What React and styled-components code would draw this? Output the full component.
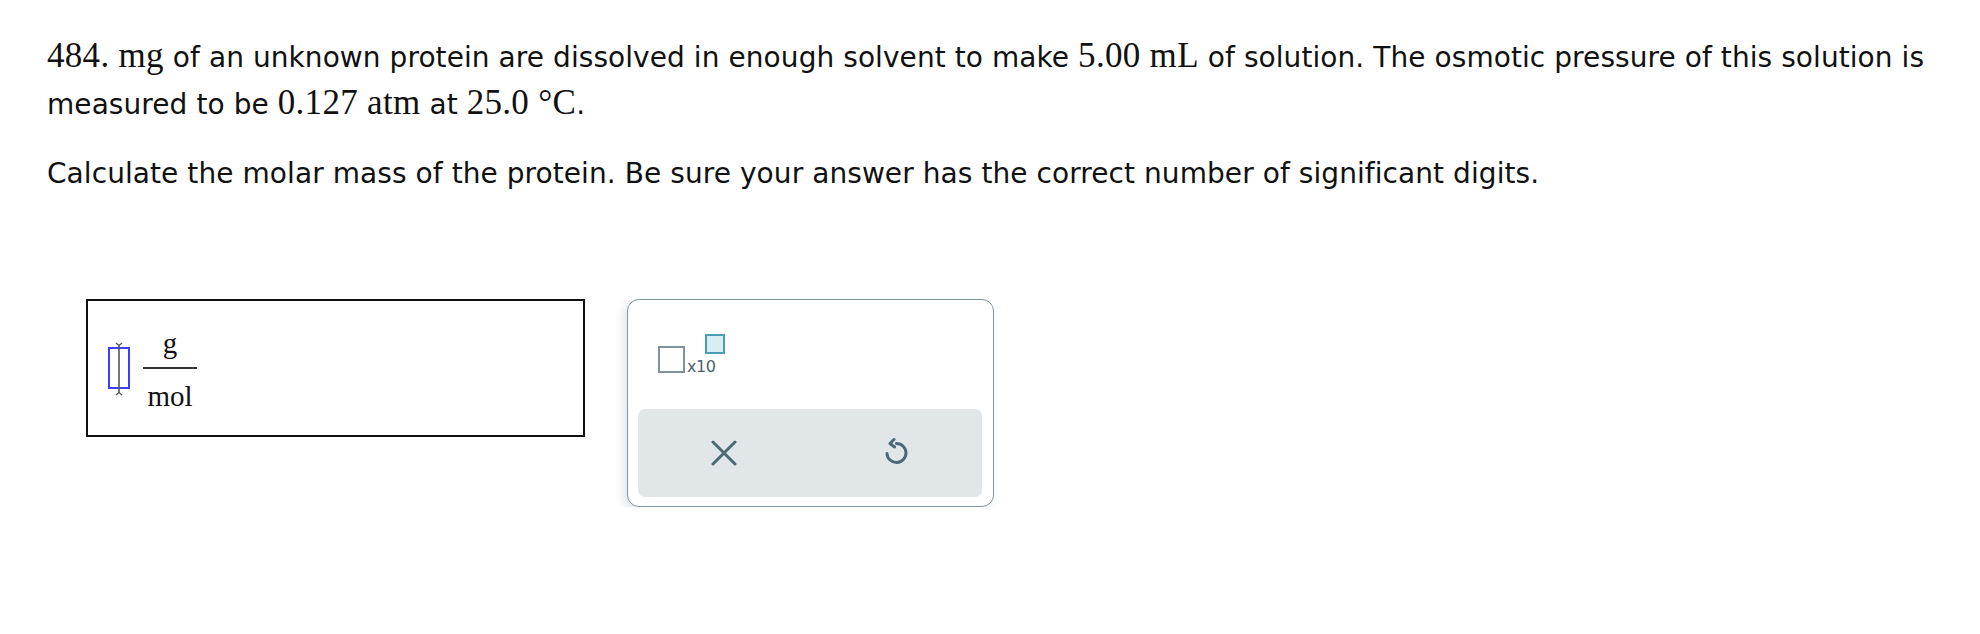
import React from "react";
import styled, { createGlobalStyle } from "styled-components";

const GlobalStyle = createGlobalStyle`
  html, body { margin: 0; padding: 0; background: #fff; }
  body { font-family: "DejaVu Sans", Verdana, sans-serif; color: #111; }
`;

const Page = styled.div`
  padding: 34px 20px 0 47px;
`;

const Para = styled.p`
  margin: 0;
  font-size: 28px;
  line-height: 47px;
  letter-spacing: 0.07px;
  & + & { margin-top: 22px; }
`;

const M = styled.span`
  font-family: "Liberation Serif", "Times New Roman", serif;
  font-size: 35px;
  line-height: 1;
  letter-spacing: 0.3px;
`;

const AnswerRow = styled.div`
  display: flex;
  align-items: flex-start;
  gap: 42px;
  margin: 102px 0 0 39px;
`;

const AnswerBox = styled.div`
  box-sizing: border-box;
  width: 499px;
  height: 138px;
  border: 2px solid #111;
  display: flex;
  align-items: center;
  padding-left: 20px;
`;

const Slot = styled.div`
  position: relative;
  box-sizing: border-box;
  width: 22px;
  height: 42px;
  border: 2px solid #3d3dfa;
`;

const Cursor = styled.svg`
  position: absolute;
  left: 50%;
  top: -7px;
  transform: translateX(-50%);
`;

const Fraction = styled.div`
  display: inline-flex;
  flex-direction: column;
  align-items: center;
  margin-left: 13px;
  margin-top: 6px;
  font-family: "Liberation Serif", "Times New Roman", serif;
  font-size: 29px;
  color: #111;
`;

const Num = styled.span`
  line-height: 30px;
  padding-bottom: 9px;
`;

const Bar = styled.div`
  width: 54px;
  height: 2px;
  background: #333;
`;

const Den = styled.span`
  line-height: 36px;
  padding-top: 9px;
`;

const Keypad = styled.div`
  box-sizing: border-box;
  width: 367px;
  height: 208px;
  border: 1.5px solid #82979f;
  border-radius: 12px;
  background: #fff;
  box-shadow: -4px 4px 8px rgba(40, 60, 70, 0.12);
  padding: 0 11px 9px 10px;
  display: flex;
  flex-direction: column;
  justify-content: flex-end;
`;

const KeyArea = styled.div`
  flex: 1;
  display: flex;
  align-items: flex-start;
  padding: 46px 0 0 20px;
`;

const SciKey = styled.div`
  display: flex;
  align-items: flex-end;
`;

const Base = styled.div`
  box-sizing: border-box;
  width: 27px;
  height: 27px;
  border: 2.5px solid #7e949d;
  margin-bottom: 1px;
`;

const TimesTen = styled.span`
  font-family: "DejaVu Sans", sans-serif;
  font-size: 16px;
  color: #4e626c;
  line-height: 15px;
  margin-left: 2px;
  letter-spacing: -0.5px;
`;

const Exp = styled.div`
  box-sizing: border-box;
  width: 20px;
  height: 20px;
  border: 2.5px solid #4a9db5;
  background: #d6eef4;
  align-self: flex-start;
  margin-top: -12px;
  margin-left: -10px;
`;

const ButtonBar = styled.div`
  height: 88px;
  background: #e1e6e9;
  border-radius: 7px;
  display: grid;
  grid-template-columns: 1fr 1fr;
`;

const Btn = styled.button`
  border: 0;
  background: transparent;
  display: flex;
  align-items: center;
  justify-content: center;
  padding: 0;
  cursor: pointer;
`;

export default function App() {
  return (
    <>
      <GlobalStyle />
      <Page>
        <Para>
          <M>484. mg</M> of an unknown protein are dissolved in enough solvent to make{" "}
          <M>5.00 mL</M> of solution. The osmotic pressure of this solution is measured to be{" "}
          <M>0.127 atm</M> at <M>25.0 °C</M>.
        </Para>
        <Para>
          Calculate the molar mass of the protein. Be sure your answer has the correct number of significant digits.
        </Para>
        <AnswerRow>
          <AnswerBox>
            <Slot>
              <Cursor width="10" height="54" viewBox="0 0 10 54">
                <path d="M5 3v48" stroke="#555" strokeWidth="1.6" />
                <path d="M2 1l3 2.5L8 1M2 53l3-2.5L8 53" stroke="#555" strokeWidth="1.3" fill="none" />
              </Cursor>
            </Slot>
            <Fraction>
              <Num>g</Num>
              <Bar />
              <Den>mol</Den>
            </Fraction>
          </AnswerBox>
          <Keypad>
            <KeyArea>
              <SciKey>
                <Base />
                <TimesTen>x10</TimesTen>
                <Exp />
              </SciKey>
            </KeyArea>
            <ButtonBar>
              <Btn aria-label="clear">
                <svg width="26" height="26" viewBox="0 0 26 26">
                  <path d="M2 2L24 24M24 2L2 24" stroke="#4c6977" strokeWidth="3" strokeLinecap="round" />
                </svg>
              </Btn>
              <Btn aria-label="undo">
                <svg width="30" height="30" viewBox="0 0 30 30">
                  <path d="M15.5 5.5A9.5 9.5 0 1 1 6 15.5" stroke="#4c6977" strokeWidth="3" fill="none" strokeLinecap="round" />
                  <path d="M13 1.5L9 5.5L13.5 9" stroke="#4c6977" strokeWidth="3" fill="none" strokeLinecap="round" strokeLinejoin="round" />
                </svg>
              </Btn>
            </ButtonBar>
          </Keypad>
        </AnswerRow>
      </Page>
    </>
  );
}
